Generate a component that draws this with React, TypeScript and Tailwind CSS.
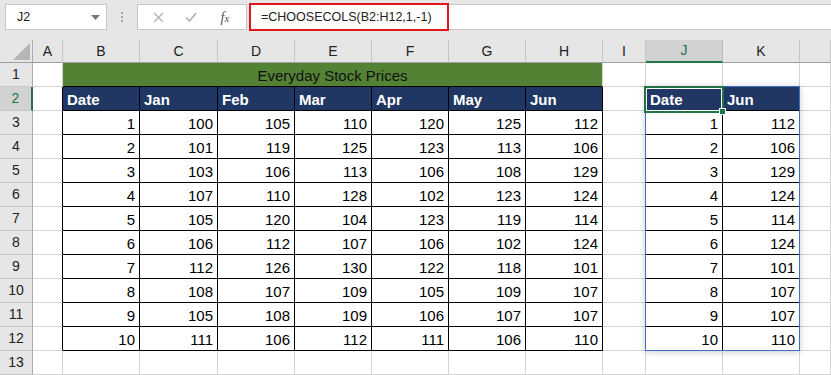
import React from "react";

const data: number[][] = [
  [1, 100, 105, 110, 120, 125, 112],
  [2, 101, 119, 125, 123, 113, 106],
  [3, 103, 106, 113, 106, 108, 129],
  [4, 107, 110, 128, 102, 123, 124],
  [5, 105, 120, 104, 123, 119, 114],
  [6, 106, 112, 107, 106, 102, 124],
  [7, 112, 126, 130, 122, 118, 101],
  [8, 108, 107, 109, 105, 109, 107],
  [9, 105, 108, 109, 106, 107, 107],
  [10, 111, 106, 112, 111, 106, 110],
];
const months = ["Date", "Jan", "Feb", "Mar", "Apr", "May", "Jun"];
const letters = ["", "A", "B", "C", "D", "E", "F", "G", "H", "I", "J", "K", ""];

const inTbl = (r: number, c: number) =>
  r >= 2 && r <= 12 && ((c >= 2 && c <= 8) || c === 10 || c === 11);

function cellBorder(r: number, c: number) {
  const right = inTbl(r, c) || inTbl(r, c + 1) ? "border-r-black" : "border-r-[#d4d4d4]";
  const bottom = inTbl(r, c) || inTbl(r + 1, c) ? "border-b-black" : "border-b-[#d4d4d4]";
  return `border-r border-b h-[24px] ${right} ${bottom}`;
}

function RowHeader({ r }: { r: number }) {
  if (r === 2) {
    return (
      <div className="h-[24px] bg-[#d2d2d2] border-b border-b-[#c8c8c8] border-r-2 border-r-[#217346] flex items-center justify-center text-[14px] text-[#217346]">
        {r}
      </div>
    );
  }
  return (
    <div className="h-[24px] bg-[#e6e6e6] border-b border-b-[#c8c8c8] border-r border-r-[#ababab] flex items-center justify-center text-[14px] text-[#222]">
      {r}
    </div>
  );
}

function Row({ r }: { r: number }) {
  const cells: React.ReactNode[] = [<RowHeader key="h" r={r} />];
  if (r === 1) {
    cells.push(<div key="a" className={cellBorder(1, 1)} />);
    cells.push(
      <div
        key="m"
        className="col-span-7 h-[24px] bg-[#548235] border-b border-b-black border-r border-r-[#d4d4d4] flex items-end justify-center pb-[3px] leading-[15px] text-[15px] text-[#111]"
      >
        Everyday Stock Prices
      </div>
    );
    for (let c = 9; c <= 12; c++) cells.push(<div key={c} className={cellBorder(1, c)} />);
    return <>{cells}</>;
  }
  for (let c = 1; c <= 12; c++) {
    const cls = cellBorder(r, c);
    let content: React.ReactNode = null;
    let extra = "";
    if (r === 2 && ((c >= 2 && c <= 8) || c === 10 || c === 11)) {
      const label = c <= 8 ? months[c - 2] : c === 10 ? "Date" : "Jun";
      content = label;
      extra = "bg-[#203764] text-white font-bold justify-start pl-[4px]";
    } else if (r >= 3 && r <= 12) {
      const row = data[r - 3];
      if (c >= 2 && c <= 8) {
        content = row[c - 2];
        extra = "justify-end pr-[4px] text-black";
      } else if (c === 10) {
        content = row[0];
        extra = "justify-end pr-[4px] text-black";
      } else if (c === 11) {
        content = row[6];
        extra = "justify-end pr-[4px] text-black";
      }
    }
    cells.push(
      <div key={c} className={`${cls} flex items-end pb-[3px] leading-[15px] text-[15px] ${extra}`}>
        {content}
      </div>
    );
  }
  return <>{cells}</>;
}

export default function App() {
  return (
    <div className="w-[831px] h-[375px] overflow-hidden bg-white font-['Liberation_Sans',Arial,sans-serif] select-none">
      {/* Top formula bar */}
      <div className="h-[40px] bg-[#e6e6e6] flex items-start pt-[4px]">
        <div className="ml-[5px] w-[102px] h-[26px] bg-white border border-[#c6c6c6] flex items-center justify-between pl-[11px] pr-[6px] text-[12.5px] text-[#222]">
          <span>J2</span>
          <svg width="9" height="5" viewBox="0 0 9 5">
            <polygon points="0,0 9,0 4.5,5" fill="#777" />
          </svg>
        </div>
        <div className="w-[30px] h-[26px] flex flex-col items-center justify-center gap-[2px]">
          <div className="w-[2px] h-[2px] bg-[#a6a6a6]" />
          <div className="w-[2px] h-[2px] bg-[#a6a6a6]" />
          <div className="w-[2px] h-[2px] bg-[#a6a6a6]" />
        </div>
        <div className="w-[110px] h-[26px] bg-white border border-[#c6c6c6] flex items-center">
          <div className="w-[40px] flex justify-center">
            <svg width="11" height="11" viewBox="0 0 11 11">
              <path d="M1 1 L10 10 M10 1 L1 10" stroke="#b0b0b0" strokeWidth="1.3" fill="none" />
            </svg>
          </div>
          <div className="w-[26px] flex justify-center">
            <svg width="12" height="10" viewBox="0 0 12 10">
              <path d="M1 5.5 L4.5 9 L11 1" stroke="#b0b0b0" strokeWidth="1.6" fill="none" />
            </svg>
          </div>
          <div className="flex-1 flex justify-center font-['Liberation_Serif',serif] italic text-[14px] text-[#555]">
            <span>f</span>
            <span className="text-[11px] mt-[3px]">x</span>
          </div>
        </div>
        <div className="ml-[2px] flex-1 h-[26px] bg-white border-y border-[#c6c6c6] flex items-center">
          <div className="w-[200px] h-[28px] border-2 border-[#e3151a] flex items-center pl-[10px] text-[12.5px] text-[#222] whitespace-nowrap">
            =CHOOSECOLS(B2:H12,1,-1)
          </div>
        </div>
      </div>

      {/* Sheet */}
      <div className="grid grid-cols-[33px_30px_77px_78px_77px_77px_77px_77px_77px_43px_77px_77px_31px]">
        {letters.map((l, i) => {
          if (i === 0) {
            return (
              <div key={i} className="h-[23px] bg-[#e6e6e6] border-b border-b-[#9e9e9e] border-r border-r-[#ababab] flex items-end justify-end pr-[2px] pb-[2px]">
                <svg width="17" height="17" viewBox="0 0 17 17">
                  <polygon points="17,0 17,17 0,17" fill="#b5b5b5" />
                </svg>
              </div>
            );
          }
          if (i === 10) {
            return (
              <div key={i} className="h-[23px] bg-[#d2d2d2] border-b-2 border-b-[#217346] border-r border-r-[#bdbdbd] flex items-center justify-center text-[14px] text-[#217346]">
                {l}
              </div>
            );
          }
          return (
            <div key={i} className="h-[23px] bg-[#e6e6e6] border-b border-b-[#9e9e9e] border-r border-r-[#c4c4c4] flex items-center justify-center text-[14px] text-[#222]">
              {l}
            </div>
          );
        })}
      </div>
      <div className="relative">
        <div className="grid grid-cols-[33px_30px_77px_78px_77px_77px_77px_77px_77px_43px_77px_77px_31px]">
          {Array.from({ length: 13 }, (_, k) => (
            <Row key={k} r={k + 1} />
          ))}
        </div>
        {/* spill range outline */}
        <div className="absolute left-[645px] top-[23px] w-[155px] h-[265px] border border-[#3f6fc3] shadow-[0_1px_6px_rgba(0,0,0,0.22)] pointer-events-none" />
        {/* active cell */}
        <div className="absolute left-[644px] top-[23px] w-[80px] h-[27px] border-2 border-[#217346] shadow-[inset_0_0_0_1px_#ffffff] pointer-events-none" />
        <div className="absolute left-[719px] top-[45px] w-[7px] h-[7px] bg-[#217346] border border-white pointer-events-none" />
      </div>
    </div>
  );
}
